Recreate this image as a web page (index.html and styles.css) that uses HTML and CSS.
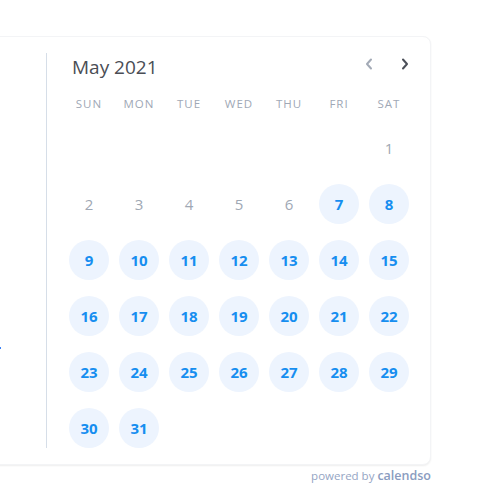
FILE: index.html
```html
<!DOCTYPE html>
<html lang="en">
<head>
    <meta charset="UTF-8">
    <meta name="viewport" content="width=device-width, initial-scale=1.0">
    <title>Book a time</title>
    <link rel="stylesheet" href="styles.css">
</head>
<body>
    <div class="page">
        <div class="booking-card">
            <div class="event-info">
                <span class="event-mark"></span>
            </div>

            <div class="calendar">
                <div class="calendar-header">
                    <span class="month-title">May 2021</span>
                    <div class="month-nav">
                        <button class="nav-btn nav-prev" aria-label="Previous month">
                            <svg width="8" height="12" viewBox="0 0 8 12"><path d="M6 1.5 L2 6 L6 10.5" fill="none" stroke="currentColor" stroke-width="2" stroke-linecap="round" stroke-linejoin="round"/></svg>
                        </button>
                        <button class="nav-btn nav-next" aria-label="Next month">
                            <svg width="8" height="12" viewBox="0 0 8 12"><path d="M2 1.5 L6 6 L2 10.5" fill="none" stroke="currentColor" stroke-width="2" stroke-linecap="round" stroke-linejoin="round"/></svg>
                        </button>
                    </div>
                </div>

                <div class="weekdays">
                    <span>Sun</span>
                    <span>Mon</span>
                    <span>Tue</span>
                    <span>Wed</span>
                    <span>Thu</span>
                    <span>Fri</span>
                    <span>Sat</span>
                </div>

                <div class="days" id="days"></div>
            </div>
        </div>

        <div class="powered">powered by <span class="brand">calendso</span></div>
    </div>

    <script>
        // May 2021 starts on a Saturday; days before the 7th are not bookable
        function renderDays() {
            const days = document.getElementById('days');
            const offset = 6;
            const total = 31;
            const firstOpen = 7;

            for (let i = 0; i < offset; i++) {
                days.appendChild(document.createElement('span'));
            }

            for (let d = 1; d <= total; d++) {
                const day = document.createElement('button');
                day.className = d >= firstOpen ? 'day day-open' : 'day';
                day.textContent = d;
                days.appendChild(day);
            }
        }

        renderDays();
    </script>
</body>
</html>
```

FILE: styles.css
```css
* {
    margin: 0;
    padding: 0;
    box-sizing: border-box;
}

body {
    background: #ffffff;
    font-family: 'Open Sans', 'Noto Sans', sans-serif;
    overflow: hidden;
}

.page {
    padding-top: 36px;
    width: 431px;
}

.booking-card {
    display: flex;
    margin-left: -60px;
    width: 491px;
    padding: 16px 0 16px;
    background: #ffffff;
    border: 1px solid #f3f4f6;
    border-radius: 8px;
    box-shadow: 0 1px 2px rgba(0, 0, 0, 0.07);
}

.event-info {
    width: 105px;
    flex-shrink: 0;
}

.event-mark {
    display: block;
    width: 1px;
    height: 2px;
    margin: 294px 0 0 59px;
    background: #3b82f6;
}

.calendar {
    width: 385px;
    padding: 0 16px 0 17px;
    border-left: 1px solid #d6dee8;
}

.calendar-header {
    display: flex;
    justify-content: space-between;
    align-items: flex-start;
    height: 28px;
    padding-left: 8px;
}

.month-title {
    font-size: 19px;
    line-height: 28px;
    color: #4a4d55;
}

.month-nav {
    display: flex;
    gap: 18px;
    margin-top: 1px;
}

.nav-btn {
    width: 18px;
    height: 20px;
    display: flex;
    align-items: center;
    justify-content: center;
    border: none;
    background: none;
}

.nav-prev {
    color: #a3aab6;
}

.nav-next {
    color: #4b4f58;
}

.weekdays {
    display: grid;
    grid-template-columns: repeat(7, 1fr);
    margin-top: 12px;
    height: 20px;
    align-items: center;
}

.weekdays span {
    text-align: center;
    font-size: 11.5px;
    letter-spacing: 1px;
    text-transform: uppercase;
    color: #a0a8b6;
}

.days {
    display: grid;
    grid-template-columns: repeat(7, 1fr);
    grid-auto-rows: 40px;
    row-gap: 16px;
    margin-top: 15px;
}

.day {
    width: 40px;
    height: 40px;
    justify-self: center;
    border: none;
    border-radius: 50%;
    background: none;
    font-family: inherit;
    font-size: 15px;
    color: #a0a8b4;
}

.day-open {
    background: #edf4fe;
    color: #168ef0;
    font-weight: 700;
}

.powered {
    margin-top: 3px;
    text-align: right;
    font-size: 11.5px;
    line-height: 16px;
    color: #95a5c4;
}

.brand {
    font-size: 12.5px;
    font-weight: 600;
    color: #8a9cc0;
}
```
